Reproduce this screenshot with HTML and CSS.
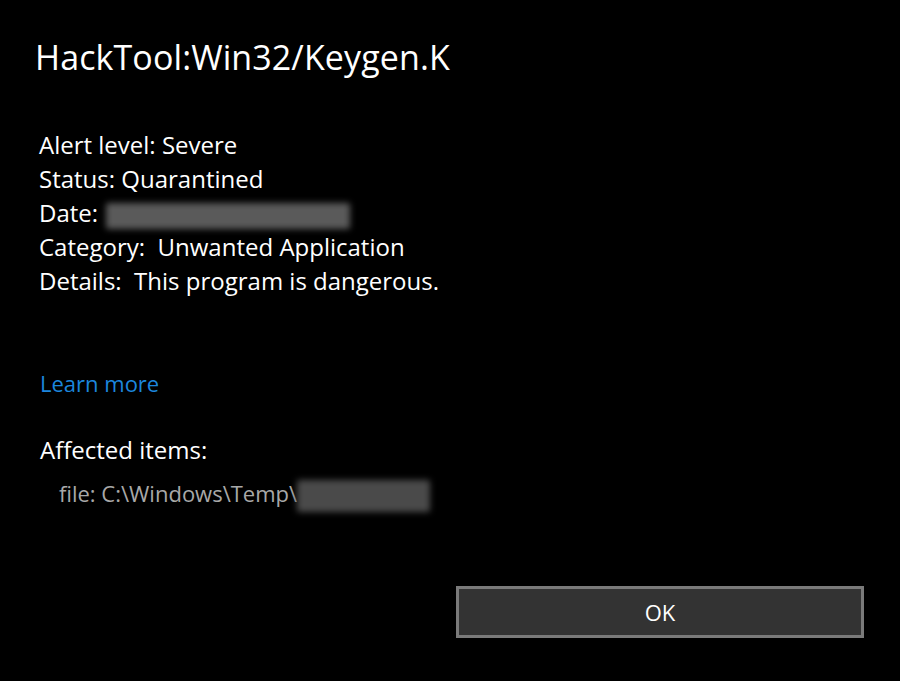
FILE: index.html
```html
<!DOCTYPE html>
<html lang="en">
<head>
    <meta charset="UTF-8">
    <title>HackTool:Win32/Keygen.K</title>
    <link rel="stylesheet" href="styles.css">
</head>
<body>
    <div class="dialog">
        <h1 class="title">HackTool:Win32/Keygen.K</h1>

        <div class="info">
            <div class="row">Alert level: Severe</div>
            <div class="row">Status: Quarantined</div>
            <div class="row">Date: <span class="blur blur-date"></span></div>
            <div class="row">Category:&nbsp; Unwanted Application</div>
            <div class="row">Details:&nbsp; This program is dangerous.</div>
        </div>

        <a class="learn" href="#">Learn more</a>

        <div class="affected">
            <div class="affected-title">Affected items:</div>
            <div class="file">file: C:\Windows\Temp\<span class="blur blur-file"></span></div>
        </div>

        <div class="actions">
            <button class="ok">OK</button>
        </div>
    </div>
</body>
</html>
```

FILE: styles.css
```css
* {
    box-sizing: border-box;
    margin: 0;
    padding: 0;
}

body {
    background: #000;
    color: #fff;
    font-family: "Open Sans", "Noto Sans", sans-serif;
    height: 100vh;
}

.dialog {
    padding: 35px 36px 0 35px;
    display: flex;
    flex-direction: column;
    align-items: flex-start;
    height: 100%;
}

.title {
    font-weight: 400;
    font-size: 34px;
    line-height: 44px;
    letter-spacing: 0.1px;
}

.info {
    margin-top: 49px;
    padding-left: 4px;
    font-size: 24px;
    line-height: 34px;
}

.blur {
    display: inline-block;
    vertical-align: middle;
    background: #5a5a5a;
    filter: blur(3px);
    border-radius: 2px;
}

.blur-date {
    width: 244px;
    height: 26px;
    margin-left: 2px;
}

.learn {
    margin-top: 70px;
    padding-left: 5px;
    color: #1c86dd;
    font-size: 22px;
    line-height: 30px;
    text-decoration: none;
}

.affected {
    margin-top: 36px;
    padding-left: 5px;
}

.affected-title {
    font-size: 24px;
    line-height: 32px;
}

.file {
    margin-top: 12px;
    padding-left: 19px;
    color: #a8a8a8;
    font-size: 22px;
    line-height: 30px;
}

.blur-file {
    width: 133px;
    height: 32px;
    background: #4a4a4a;
}

.actions {
    margin-top: 74px;
    align-self: stretch;
    display: flex;
    justify-content: flex-end;
}

.ok {
    width: 408px;
    height: 52px;
    background: #333;
    border: 3px solid #7a7a7a;
    color: #fff;
    font-family: inherit;
    font-size: 22px;
}
```
